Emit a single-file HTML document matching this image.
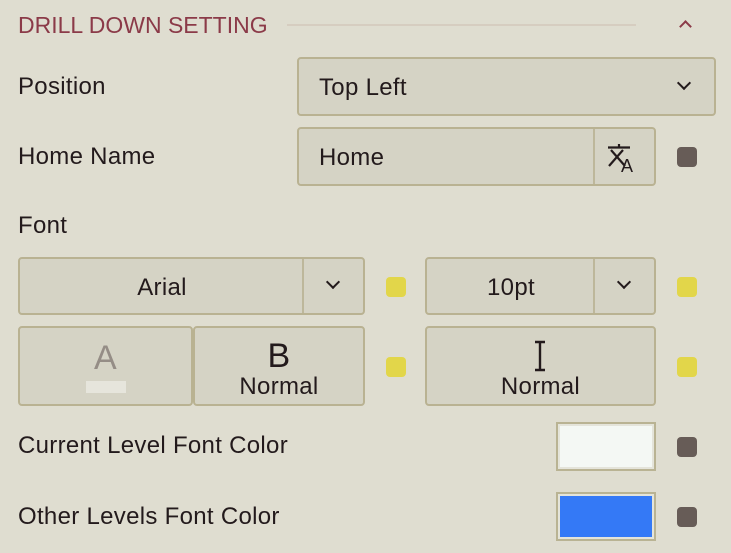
<!DOCTYPE html>
<html><head><meta charset="utf-8"><style>
*{box-sizing:border-box;margin:0;padding:0}
body{width:731px;height:553px;background:#dfddd0;font-family:"Liberation Sans",sans-serif;color:#231a1c;position:relative;overflow:hidden}
.a{position:absolute}
.lbl{font-size:24px;line-height:26px;letter-spacing:0.3px}
.box{position:absolute;background:#d5d3c5;border:2px solid #b9b292;border-radius:4px}
.dv{position:absolute;top:0;bottom:0;width:2px;background:#bdb79b}
.sq{position:absolute;width:20px;height:20px;border-radius:4px}
.g{background:#675c57}.y{background:#e2d64a}
.t{position:absolute;font-size:24px;line-height:26px;text-align:center;letter-spacing:0.3px}
.chev{position:absolute;width:10px;height:10px;border-right:2px solid #231a1c;border-bottom:2px solid #231a1c;transform:rotate(45deg)}
</style></head><body>
<div class="a" style="left:18px;top:11px;font-size:23px;line-height:28px;color:#8b3a48">DRILL DOWN SETTING</div>
<div class="a" style="left:287px;top:24px;width:349px;height:2px;background:#d6cdc0"></div>
<div class="a" style="left:681px;top:22px;width:9px;height:9px;border-left:2px solid #8b3a48;border-top:2px solid #8b3a48;transform:rotate(45deg)"></div>

<div class="a lbl" style="left:18px;top:74px">Position</div>
<div class="box" style="left:297px;top:57px;width:419px;height:59px"><div class="a lbl" style="left:20px;top:16px">Top Left</div><div class="chev" style="left:380px;top:19px"></div></div>

<div class="a lbl" style="left:18px;top:144px">Home Name</div>
<div class="box" style="left:297px;top:127px;width:359px;height:59px"><div class="a lbl" style="left:20px;top:16px">Home</div><div class="dv" style="left:294px"></div>
<svg class="a" style="left:307px;top:14px" width="36" height="32" viewBox="0 0 36 32"><path d="M2 4.5H24M13 1V4.5M5 7L19 23M17 7L3 23" stroke="#231a1c" stroke-width="2.2" fill="none"/><text x="15" y="29" font-size="18" font-family="Liberation Sans" fill="#231a1c">A</text></svg></div>
<div class="sq g" style="left:677px;top:147px"></div>

<div class="a lbl" style="left:18px;top:213px">Font</div>
<div class="box" style="left:18px;top:257px;width:347px;height:58px"><div class="t" style="left:0;width:284px;top:16px">Arial</div><div class="dv" style="left:282px"></div><div class="chev" style="left:308px;top:18px"></div></div>
<div class="sq y" style="left:386px;top:277px"></div>
<div class="box" style="left:425px;top:257px;width:231px;height:58px"><div class="t" style="left:0;width:168px;top:16px">10pt</div><div class="dv" style="left:166px"></div><div class="chev" style="left:192px;top:18px"></div></div>
<div class="sq y" style="left:677px;top:277px"></div>

<div class="box" style="left:18px;top:326px;width:175px;height:80px"><div class="t" style="left:0;width:171px;top:12px;font-size:34px;line-height:36px;color:#958d86">A</div><div class="a" style="left:66px;top:53px;width:40px;height:12px;background:#e6e5dc"></div></div>
<div class="box" style="left:193px;top:326px;width:172px;height:80px"><div class="t" style="left:0;width:168px;top:10px;font-size:34px;line-height:36px">B</div><div class="t" style="left:0;width:168px;top:46px">Normal</div></div>
<div class="sq y" style="left:386px;top:357px"></div>
<div class="box" style="left:425px;top:326px;width:231px;height:80px">
<svg class="a" style="left:105px;top:12px" width="16" height="32" viewBox="0 0 16 32"><path d="M3 2H13M8 2V30M3 30H13" stroke="#231a1c" stroke-width="2.4" fill="none"/></svg>
<div class="t" style="left:0;width:227px;top:46px">Normal</div></div>
<div class="sq y" style="left:677px;top:357px"></div>

<div class="a lbl" style="left:18px;top:433px">Current Level Font Color</div>
<div class="a" style="left:556px;top:422px;width:100px;height:49px;border:2px solid #b9b393;background:#e4e4da;padding:2px"><div style="width:100%;height:100%;background:#f4f8f4"></div></div>
<div class="sq g" style="left:677px;top:437px"></div>

<div class="a lbl" style="left:18px;top:504px">Other Levels Font Color</div>
<div class="a" style="left:556px;top:492px;width:100px;height:49px;border:2px solid #b9b393;background:#e4e4da;padding:2px"><div style="width:100%;height:100%;background:#3479f6"></div></div>
<div class="sq g" style="left:677px;top:507px"></div>
</body></html>
